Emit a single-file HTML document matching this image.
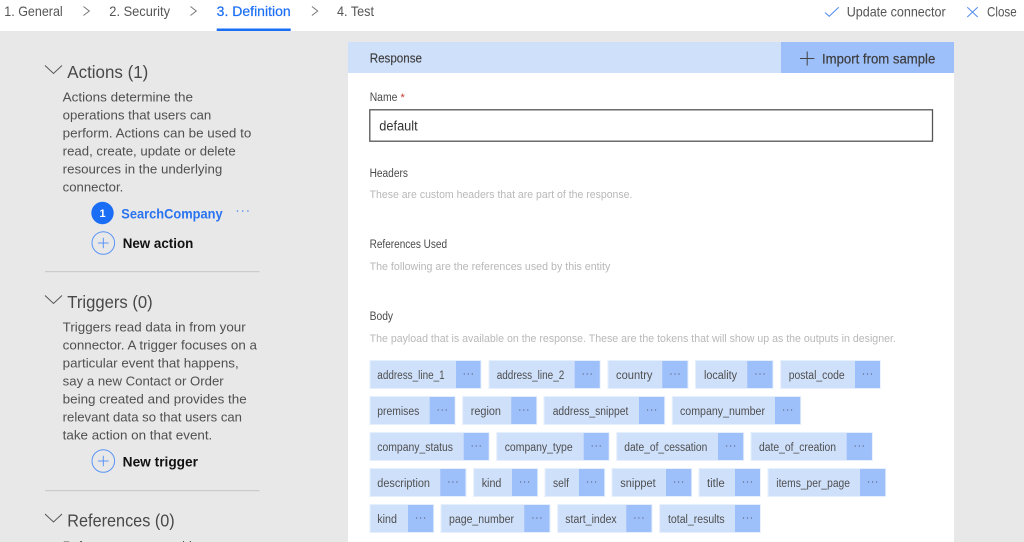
<!DOCTYPE html>
<html><head><meta charset="utf-8"><title>Definition</title>
<style>
html,body{margin:0;padding:0;width:1024px;height:542px;overflow:hidden;background:#e8e8e8}
svg{display:block}
text{font-family:"Liberation Sans",sans-serif;white-space:pre}
.b{filter:blur(.35px)}
.d{font-size:13px;fill:#505050}
.n{font-size:14px;fill:#555}
.h{font-size:17.500px;fill:#484848}
.l{font-size:11.500px;fill:#4a4a4a}
.g{font-size:11px;fill:#b8b8b8}
.t{font-size:11.500px;fill:#4f4f4f}
.tk{fill:#cfe0fb;stroke:#e6effd;stroke-width:1}
.bt{fill:#9dbffa}
.dt{fill:#5a6478}
</style></head><body>
<svg width="1024" height="542" viewBox="0 0 1024 542" xmlns="http://www.w3.org/2000/svg">
<rect width="1024" height="542" fill="#e8e8e8"/>
<rect width="1024" height="31" fill="#fff"/>
<rect x="348" y="42" width="606" height="500" fill="#fff"/>
<rect x="348" y="42" width="606" height="31" fill="#cfe0fb"/>
<rect x="781" y="42" width="173" height="31" fill="#9dbffa"/>
<rect x="216.700" y="28.500" width="74" height="2.500" fill="#1a6ef5"/>
<g class="b">
<text class="n" x="4.300" y="16" textLength="58.400" lengthAdjust="spacingAndGlyphs">1. General</text>
<text class="n" x="109.300" y="16" textLength="60.700" lengthAdjust="spacingAndGlyphs">2. Security</text>
<text class="n" x="216.700" y="16" textLength="74" lengthAdjust="spacingAndGlyphs" style="fill:#1a6ef5;stroke:#1a6ef5;stroke-width:.2">3. Definition</text>
<text class="n" x="337" y="16" textLength="37" lengthAdjust="spacingAndGlyphs">4. Test</text>
<g fill="none" stroke="#777" stroke-width="1">
<path d="M83.500 6.500 89.300 11 83.500 15.500"/>
<path d="M190.500 6.500 196.300 11 190.500 15.500"/>
<path d="M311.900 6.500 317.700 11 311.900 15.500"/>
</g>
<path d="M825 12.500 829.200 16.300 838.700 7.300" fill="none" stroke="#4f8bec" stroke-width="1"/>
<text class="n" x="846.700" y="16.500" textLength="99" lengthAdjust="spacingAndGlyphs">Update connector</text>
<path d="M967.300 7.300 977.700 17M977.700 7.300 967.300 17" fill="none" stroke="#4f8bec" stroke-width="1"/>
<text class="n" x="987" y="16.500" textLength="29.700" lengthAdjust="spacingAndGlyphs">Close</text>

<path d="M45 65.500 53.500 73.500 62 65.500" fill="none" stroke="#555" stroke-width="1"/>
<text class="h" x="67.300" y="78" textLength="81" lengthAdjust="spacingAndGlyphs">Actions (1)</text>
<text class="d" x="62.700" y="101.500" textLength="130.300" lengthAdjust="spacingAndGlyphs">Actions determine the</text>
<text class="d" x="62.700" y="119.500" textLength="148.600" lengthAdjust="spacingAndGlyphs">operations that users can</text>
<text class="d" x="62.700" y="137.500" textLength="188.600" lengthAdjust="spacingAndGlyphs">perform. Actions can be used to</text>
<text class="d" x="62.700" y="155.500" textLength="173" lengthAdjust="spacingAndGlyphs">read, create, update or delete</text>
<text class="d" x="62.700" y="173.500" textLength="159.600" lengthAdjust="spacingAndGlyphs">resources in the underlying</text>
<text class="d" x="62.700" y="191.500" textLength="60.600" lengthAdjust="spacingAndGlyphs">connector.</text>
<circle cx="102.500" cy="213" r="11.200" fill="#1a6ef5"/>
<text x="102.500" y="217" text-anchor="middle" style="font-size:11px;font-weight:bold;fill:#fff">1</text>
<text x="121.300" y="218.500" textLength="101.300" lengthAdjust="spacingAndGlyphs" style="font-size:13.500px;font-weight:bold;fill:#2a73f0">SearchCompany</text>
<g fill="#4a82e8"><circle cx="237.500" cy="211" r=".8"/><circle cx="242.700" cy="211" r=".8"/><circle cx="247.900" cy="211" r=".8"/></g>
<circle cx="103.300" cy="243" r="11.300" fill="none" stroke="#5a94f5" stroke-width="1"/>
<path d="M98 243H108.600M103.300 237.700V248.300" fill="none" stroke="#5a94f5" stroke-width="1"/>
<text x="122.700" y="248" textLength="70.600" lengthAdjust="spacingAndGlyphs" style="font-size:13.500px;font-weight:bold;fill:#111">New action</text>
<rect x="45" y="271" width="214.500" height="1.200" fill="#cbcbcb"/>

<path d="M45 295.500 53.500 303.500 62 295.500" fill="none" stroke="#555" stroke-width="1"/>
<text class="h" x="67.300" y="308" textLength="85.400" lengthAdjust="spacingAndGlyphs">Triggers (0)</text>
<text class="d" x="62.700" y="331.700" textLength="183" lengthAdjust="spacingAndGlyphs">Triggers read data in from your</text>
<text class="d" x="62.700" y="349.700" textLength="194.300" lengthAdjust="spacingAndGlyphs">connector. A trigger focuses on a</text>
<text class="d" x="62.700" y="367.700" textLength="176" lengthAdjust="spacingAndGlyphs">particular event that happens,</text>
<text class="d" x="62.700" y="385.700" textLength="161" lengthAdjust="spacingAndGlyphs">say a new Contact or Order</text>
<text class="d" x="62.700" y="403.700" textLength="184" lengthAdjust="spacingAndGlyphs">being created and provides the</text>
<text class="d" x="62.700" y="421.700" textLength="179.300" lengthAdjust="spacingAndGlyphs">relevant data so that users can</text>
<text class="d" x="62.700" y="439.700" textLength="149.600" lengthAdjust="spacingAndGlyphs">take action on that event.</text>
<circle cx="103.300" cy="461" r="11.300" fill="none" stroke="#5a94f5" stroke-width="1"/>
<path d="M98 461H108.600M103.300 455.700V466.300" fill="none" stroke="#5a94f5" stroke-width="1"/>
<text x="122.700" y="466.500" textLength="75.300" lengthAdjust="spacingAndGlyphs" style="font-size:13.500px;font-weight:bold;fill:#111">New trigger</text>
<rect x="45" y="490" width="214.500" height="1.200" fill="#cbcbcb"/>

<path d="M45 514 53.500 522 62 514" fill="none" stroke="#555" stroke-width="1"/>
<text class="h" x="67.300" y="526.700" textLength="107.400" lengthAdjust="spacingAndGlyphs">References (0)</text>
<text class="d" x="62.700" y="550.500" textLength="136" lengthAdjust="spacingAndGlyphs">References are reusable</text>

<text x="369.700" y="62.700" textLength="52.300" lengthAdjust="spacingAndGlyphs" style="font-size:13px;fill:#3c3c3c;stroke:#3c3c3c;stroke-width:.15">Response</text>
<path d="M800 58.500H814.300M807.200 51.500V65.500" fill="none" stroke="#444" stroke-width="1"/>
<text x="822" y="63.300" textLength="113.300" lengthAdjust="spacingAndGlyphs" style="font-size:13.500px;fill:#3c3c3c;stroke:#3c3c3c;stroke-width:.2">Import from sample</text>

<text class="l" x="369.700" y="101" textLength="27.700" lengthAdjust="spacingAndGlyphs">Name</text>
<text x="400.500" y="101" style="font-size:11px;fill:#c0392b">*</text>
<rect x="369.800" y="109.800" width="562.700" height="31.400" fill="#fff" stroke="#555" stroke-width="1.300"/>
<text x="379.300" y="130.700" textLength="38.400" lengthAdjust="spacingAndGlyphs" style="font-size:13.500px;fill:#333">default</text>

<text class="l" x="369.600" y="177" textLength="38.300" lengthAdjust="spacingAndGlyphs">Headers</text>
<text class="g" x="369.600" y="198" textLength="262.800" lengthAdjust="spacingAndGlyphs">These are custom headers that are part of the response.</text>
<text class="l" x="369.600" y="248" textLength="77.500" lengthAdjust="spacingAndGlyphs">References Used</text>
<text class="g" x="369.600" y="270" textLength="240.700" lengthAdjust="spacingAndGlyphs">The following are the references used by this entity</text>
<text class="l" x="369.600" y="320" textLength="23.500" lengthAdjust="spacingAndGlyphs">Body</text>
<text class="g" x="369.600" y="342" textLength="526.300" lengthAdjust="spacingAndGlyphs">The payload that is available on the response. These are the tokens that will show up as the outputs in designer.</text>

<!-- row 1 -->
<rect class="tk" x="370" y="360.500" width="111" height="28"/><rect class="bt" x="456" y="361" width="24.500" height="27"/>
<text class="t" x="377.300" y="379" textLength="67.400" lengthAdjust="spacingAndGlyphs">address_line_1</text>
<g class="dt"><circle cx="464.300" cy="374" r=".65"/><circle cx="468.300" cy="374" r=".65"/><circle cx="472.300" cy="374" r=".65"/></g>
<rect class="tk" x="489" y="360.500" width="111" height="28"/><rect class="bt" x="574.700" y="361" width="25" height="27"/>
<text class="t" x="496.700" y="379" textLength="67.600" lengthAdjust="spacingAndGlyphs">address_line_2</text>
<g class="dt"><circle cx="583.200" cy="374" r=".65"/><circle cx="587.200" cy="374" r=".65"/><circle cx="591.200" cy="374" r=".65"/></g>
<rect class="tk" x="608" y="360.500" width="80" height="28"/><rect class="bt" x="662.300" y="361" width="25.200" height="27"/>
<text class="t" x="616" y="379" textLength="36.500" lengthAdjust="spacingAndGlyphs">country</text>
<g class="dt"><circle cx="671" cy="374" r=".65"/><circle cx="675" cy="374" r=".65"/><circle cx="679" cy="374" r=".65"/></g>
<rect class="tk" x="695.500" y="360.500" width="77.500" height="28"/><rect class="bt" x="747.300" y="361" width="25.200" height="27"/>
<text class="t" x="704" y="379" textLength="33" lengthAdjust="spacingAndGlyphs">locality</text>
<g class="dt"><circle cx="756" cy="374" r=".65"/><circle cx="760" cy="374" r=".65"/><circle cx="764" cy="374" r=".65"/></g>
<rect class="tk" x="780.700" y="360.500" width="99.500" height="28"/><rect class="bt" x="855" y="361" width="25" height="27"/>
<text class="t" x="788.700" y="379" textLength="56" lengthAdjust="spacingAndGlyphs">postal_code</text>
<g class="dt"><circle cx="863.500" cy="374" r=".65"/><circle cx="867.500" cy="374" r=".65"/><circle cx="871.500" cy="374" r=".65"/></g>
<!-- row 2 -->
<rect class="tk" x="370" y="396.500" width="85" height="28"/><rect class="bt" x="429.700" y="397" width="25" height="27"/>
<text class="t" x="377.300" y="415" textLength="42" lengthAdjust="spacingAndGlyphs">premises</text>
<g class="dt"><circle cx="438.200" cy="410" r=".65"/><circle cx="442.200" cy="410" r=".65"/><circle cx="446.200" cy="410" r=".65"/></g>
<rect class="tk" x="462.700" y="396.500" width="74" height="28"/><rect class="bt" x="511.300" y="397" width="25" height="27"/>
<text class="t" x="470.700" y="415" textLength="30.300" lengthAdjust="spacingAndGlyphs">region</text>
<g class="dt"><circle cx="519.800" cy="410" r=".65"/><circle cx="523.800" cy="410" r=".65"/><circle cx="527.800" cy="410" r=".65"/></g>
<rect class="tk" x="544" y="396.500" width="120.700" height="28"/><rect class="bt" x="639" y="397" width="25.200" height="27"/>
<text class="t" x="552.700" y="415" textLength="75.700" lengthAdjust="spacingAndGlyphs">address_snippet</text>
<g class="dt"><circle cx="647.600" cy="410" r=".65"/><circle cx="651.600" cy="410" r=".65"/><circle cx="655.600" cy="410" r=".65"/></g>
<rect class="tk" x="672.300" y="396.500" width="128.400" height="28"/><rect class="bt" x="775" y="397" width="25.200" height="27"/>
<text class="t" x="680" y="415" textLength="85" lengthAdjust="spacingAndGlyphs">company_number</text>
<g class="dt"><circle cx="783.600" cy="410" r=".65"/><circle cx="787.600" cy="410" r=".65"/><circle cx="791.600" cy="410" r=".65"/></g>
<!-- row 3 -->
<rect class="tk" x="370" y="432.500" width="119" height="28"/><rect class="bt" x="463.700" y="433" width="25" height="27"/>
<text class="t" x="377.300" y="451" textLength="75.700" lengthAdjust="spacingAndGlyphs">company_status</text>
<g class="dt"><circle cx="472.200" cy="446" r=".65"/><circle cx="476.200" cy="446" r=".65"/><circle cx="480.200" cy="446" r=".65"/></g>
<rect class="tk" x="496.700" y="432.500" width="112.300" height="28"/><rect class="bt" x="583.700" y="433" width="25" height="27"/>
<text class="t" x="504.700" y="451" textLength="68" lengthAdjust="spacingAndGlyphs">company_type</text>
<g class="dt"><circle cx="592.200" cy="446" r=".65"/><circle cx="596.200" cy="446" r=".65"/><circle cx="600.200" cy="446" r=".65"/></g>
<rect class="tk" x="616.700" y="432.500" width="127" height="28"/><rect class="bt" x="718" y="433" width="25.200" height="27"/>
<text class="t" x="624.300" y="451" textLength="83" lengthAdjust="spacingAndGlyphs">date_of_cessation</text>
<g class="dt"><circle cx="726.600" cy="446" r=".65"/><circle cx="730.600" cy="446" r=".65"/><circle cx="734.600" cy="446" r=".65"/></g>
<rect class="tk" x="751" y="432.500" width="121.300" height="28"/><rect class="bt" x="846.700" y="433" width="25.200" height="27"/>
<text class="t" x="759" y="451" textLength="77" lengthAdjust="spacingAndGlyphs">date_of_creation</text>
<g class="dt"><circle cx="855.300" cy="446" r=".65"/><circle cx="859.300" cy="446" r=".65"/><circle cx="863.300" cy="446" r=".65"/></g>
<!-- row 4 -->
<rect class="tk" x="370" y="468.500" width="96" height="28"/><rect class="bt" x="440.300" y="469" width="25.200" height="27"/>
<text class="t" x="377.300" y="487" textLength="52.700" lengthAdjust="spacingAndGlyphs">description</text>
<g class="dt"><circle cx="448.900" cy="482" r=".65"/><circle cx="452.900" cy="482" r=".65"/><circle cx="456.900" cy="482" r=".65"/></g>
<rect class="tk" x="473.700" y="468.500" width="64" height="28"/><rect class="bt" x="512" y="469" width="25.200" height="27"/>
<text class="t" x="481.700" y="487" textLength="19.700" lengthAdjust="spacingAndGlyphs">kind</text>
<g class="dt"><circle cx="520.600" cy="482" r=".65"/><circle cx="524.600" cy="482" r=".65"/><circle cx="528.600" cy="482" r=".65"/></g>
<rect class="tk" x="545" y="468.500" width="59.700" height="28"/><rect class="bt" x="579" y="469" width="25.200" height="27"/>
<text class="t" x="553" y="487" textLength="16" lengthAdjust="spacingAndGlyphs">self</text>
<g class="dt"><circle cx="587.600" cy="482" r=".65"/><circle cx="591.600" cy="482" r=".65"/><circle cx="595.600" cy="482" r=".65"/></g>
<rect class="tk" x="612" y="468.500" width="79.700" height="28"/><rect class="bt" x="666" y="469" width="25.200" height="27"/>
<text class="t" x="620.300" y="487" textLength="35.400" lengthAdjust="spacingAndGlyphs">snippet</text>
<g class="dt"><circle cx="674.600" cy="482" r=".65"/><circle cx="678.600" cy="482" r=".65"/><circle cx="682.600" cy="482" r=".65"/></g>
<rect class="tk" x="699" y="468.500" width="61.300" height="28"/><rect class="bt" x="735" y="469" width="25" height="27"/>
<text class="t" x="707" y="487" textLength="17.700" lengthAdjust="spacingAndGlyphs">title</text>
<g class="dt"><circle cx="743.500" cy="482" r=".65"/><circle cx="747.500" cy="482" r=".65"/><circle cx="751.500" cy="482" r=".65"/></g>
<rect class="tk" x="768" y="468.500" width="117.700" height="28"/><rect class="bt" x="860" y="469" width="25.200" height="27"/>
<text class="t" x="776.300" y="487" textLength="73.700" lengthAdjust="spacingAndGlyphs">items_per_page</text>
<g class="dt"><circle cx="868.600" cy="482" r=".65"/><circle cx="872.600" cy="482" r=".65"/><circle cx="876.600" cy="482" r=".65"/></g>
<!-- row 5 -->
<rect class="tk" x="370" y="504.500" width="63.700" height="28"/><rect class="bt" x="408" y="505" width="25.200" height="27"/>
<text class="t" x="377.300" y="523" textLength="19.700" lengthAdjust="spacingAndGlyphs">kind</text>
<g class="dt"><circle cx="416.600" cy="518" r=".65"/><circle cx="420.600" cy="518" r=".65"/><circle cx="424.600" cy="518" r=".65"/></g>
<rect class="tk" x="441" y="504.500" width="109" height="28"/><rect class="bt" x="524.300" y="505" width="25.200" height="27"/>
<text class="t" x="449" y="523" textLength="65" lengthAdjust="spacingAndGlyphs">page_number</text>
<g class="dt"><circle cx="532.900" cy="518" r=".65"/><circle cx="536.900" cy="518" r=".65"/><circle cx="540.900" cy="518" r=".65"/></g>
<rect class="tk" x="557.700" y="504.500" width="94.300" height="28"/><rect class="bt" x="626.300" y="505" width="25.200" height="27"/>
<text class="t" x="565.300" y="523" textLength="51.400" lengthAdjust="spacingAndGlyphs">start_index</text>
<g class="dt"><circle cx="634.900" cy="518" r=".65"/><circle cx="638.900" cy="518" r=".65"/><circle cx="642.900" cy="518" r=".65"/></g>
<rect class="tk" x="659.700" y="504.500" width="100.600" height="28"/><rect class="bt" x="735" y="505" width="25" height="27"/>
<text class="t" x="668" y="523" textLength="56.700" lengthAdjust="spacingAndGlyphs">total_results</text>
<g class="dt"><circle cx="743.500" cy="518" r=".65"/><circle cx="747.500" cy="518" r=".65"/><circle cx="751.500" cy="518" r=".65"/></g>
</g>
</svg>
</body></html>
